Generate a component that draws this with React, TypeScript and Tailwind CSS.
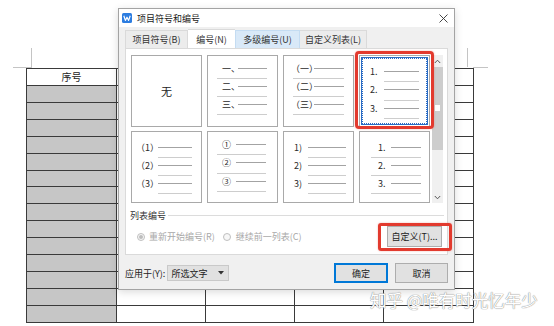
import React from "react";

type Cell = {
  labels: string[];
  pt: string;
  gap: string;
  lab: string;
  line: string;
  lower: string;
  selected?: boolean;
};

const cells: Cell[] = [
  { labels: [], pt: "", gap: "", lab: "", line: "", lower: "" },
  { labels: ["一、", "二、", "三、"], pt: "pt-[7px]", gap: "gap-[2px]", lab: "ml-[14px] w-[16px]", line: "w-[29px]", lower: "ml-[9px] w-[50px]" },
  { labels: ["（一）", "（二）", "（三）"], pt: "pt-[7px]", gap: "gap-[2px]", lab: "ml-[7px] w-[23px]", line: "w-[30px]", lower: "ml-[9px] w-[51px]" },
  { labels: ["1.", "2.", "3."], pt: "pt-[10px]", gap: "gap-[2.5px]", lab: "ml-[10px] w-[14px]", line: "w-[35px]", lower: "ml-[24px] w-[35px]", selected: true },
  { labels: ["（1）", "（2）", "（3）"], pt: "pt-[10px]", gap: "gap-[2px]", lab: "ml-[4px] w-[22px]", line: "w-[34px]", lower: "ml-[26px] w-[34px]" },
  { labels: ["①", "②", "③"], pt: "pt-[7px]", gap: "gap-[2.5px]", lab: "ml-[14px] w-[14px]", line: "w-[30px]", lower: "ml-[9px] w-[49px]" },
  { labels: ["1)", "2)", "3)"], pt: "pt-[10px]", gap: "gap-[2px]", lab: "ml-[10px] w-[14px]", line: "w-[38px]", lower: "ml-[24px] w-[38px]" },
  { labels: ["1.", "2.", "3."], pt: "pt-[10px]", gap: "gap-[2px]", lab: "ml-[18px] w-[13px]", line: "w-[30px]", lower: "ml-[11px] w-[50px]" },
];

function GalleryCell({ c, i }: { c: Cell; i: number }) {
  if (i === 0) {
    return (
      <div className="flex items-center justify-center border border-[#a9a9a9] bg-white text-[11px] text-[#222]">
        无
      </div>
    );
  }
  return (
    <div className={`relative flex flex-col border border-[#a9a9a9] bg-white ${c.pt} ${c.gap}`}>
      {c.labels.map((l) => (
        <div key={l} className="flex flex-col">
          <div className="flex h-[10px] items-center">
            <span className={`${c.lab} shrink-0 whitespace-nowrap font-['Noto_Sans_CJK_SC',sans-serif] text-[9px] leading-none text-[#2a2a2a]`}>{l}</span>
            <span className={`${c.line} h-px shrink-0 bg-[#a3a3a3]`} />
          </div>
          <div className={`${c.lower} mt-[5px] h-px bg-[#cdcdcd]`} />
        </div>
      ))}
      {c.selected ? (
        <>
          <div className="absolute inset-[1px] border border-[#2a6cc4]" />
          <div className="absolute inset-[2px] border border-dotted border-[#2a6cc4]" />
        </>
      ) : null}
    </div>
  );
}

function DocTable() {
  const rows = Array.from({ length: 15 }, (_, r) => r);
  const cols = [0, 1, 2, 3, 4];
  return (
    <div className="grid w-fit auto-rows-[16.93px] grid-cols-[90px_89px_89px_89px_90px] border-l border-t border-[#3a3a3a]">
      {rows.map((r) =>
        cols.map((c) => (
          <div
            key={`${r}-${c}`}
            className={`flex items-center justify-center border-b border-r border-[#3a3a3a] text-[10px] leading-none text-[#222] ${
              c === 0 && r > 0 ? "bg-[#c6c6c6]" : "bg-white"
            }`}
          >
            {r === 0 && c === 0 ? "序号" : null}
          </div>
        ))
      )}
    </div>
  );
}

function Radio({ checked }: { checked?: boolean }) {
  return (
    <span className="flex h-[8px] w-[8px] shrink-0 items-center justify-center rounded-full border border-[#bfbfbf] bg-[#f7f7f7]">
      {checked ? <span className="h-[4px] w-[4px] rounded-full bg-[#bdbdbd]" /> : null}
    </span>
  );
}

export default function App() {
  return (
    <div className="relative h-[326px] w-[554px] overflow-hidden bg-white font-['Noto_Sans_CJK_SC','Noto_Sans',sans-serif]">
      <div className="pl-[26px] pt-[68px]">
        <DocTable />
      </div>

      {/* page crop marks */}
      <div className="absolute left-[31px] top-[48px] h-[19px] w-px bg-[#c4c4c4]" />
      <div className="absolute left-[13px] top-[67px] h-px w-[19px] bg-[#c4c4c4]" />
      <div className="absolute left-[467px] top-[48px] h-[19px] w-px bg-[#c4c4c4]" />
      <div className="absolute left-[473px] top-[67px] h-px w-[15px] bg-[#c4c4c4]" />

      {/* dialog window */}
      <div className="absolute left-[118px] top-[8px] flex h-[282px] w-[337px] flex-col border border-[#a3a3a3] bg-[#f0f0f0] shadow-[0_2px_8px_rgba(0,0,0,0.15)]">
        <div className="flex h-[18px] shrink-0 items-center bg-white pl-[3px] pr-[6px]">
          <svg width="10" height="10" viewBox="0 0 10 10">
            <rect x="0" y="0" width="10" height="10" rx="1.5" fill="#2d7de0" />
            <polyline points="1.8,2.8 3.4,7.4 5,4.2 6.6,7.4 8.2,2.8" fill="none" stroke="#fff" strokeWidth="1.2" strokeLinejoin="round" />
          </svg>
          <span className="ml-[5px] text-[9px] leading-none text-[#1a1a1a]">项目符号和编号</span>
          <svg className="ml-auto" width="9" height="9" viewBox="0 0 9 9">
            <path d="M0.5 0.5 L8.5 8.5 M8.5 0.5 L0.5 8.5" stroke="#333" strokeWidth="0.9" />
          </svg>
        </div>

        {/* tabs */}
        <div className="mt-[3px] flex h-[18px] shrink-0 items-end pl-[6px] text-[9px] leading-none text-[#333]">
          <div className="flex h-[18px] w-[63px] items-center justify-center border border-b-0 border-[#dadada] bg-[#ececec]">项目符号(B)</div>
          <div className="flex h-[19px] w-[47px] items-center justify-center border-t border-[#dadada] bg-white">编号(N)</div>
          <div className="flex h-[18px] w-[65px] items-center justify-center border border-b-0 border-[#c4dcf2] bg-[#d9e9f8]">多级编号(U)</div>
          <div className="flex h-[18px] w-[67px] items-center justify-center border border-b-0 border-l-0 border-[#dadada] bg-[#ececec]">自定义列表(L)</div>
        </div>

        {/* tab panel */}
        <div className="mx-[6px] flex h-[207px] shrink-0 flex-col border border-[#dadada] bg-white">
          <div className="flex pl-[5px] pt-[6px]">
            <div className="grid grid-cols-[71px_71px_71px_71px] grid-rows-[72px_72px] gap-x-[5px] gap-y-[4px]">
              {cells.map((c, i) => (
                <GalleryCell key={i} c={c} i={i} />
              ))}
            </div>
            <div className="ml-[2px] flex h-[148px] w-[11px] flex-col bg-[#f0f0f0]">
              <div className="flex h-[12px] items-center justify-center">
                <svg width="7" height="5" viewBox="0 0 7 5">
                  <path d="M0.8 4 L3.5 1.2 L6.2 4" fill="none" stroke="#555" strokeWidth="1" />
                </svg>
              </div>
              <div className="flex h-[83px] flex-col bg-[#cdcdcd]">
                <div className="ml-[3px] mt-[38px] h-[6px] w-[5px] bg-white" />
              </div>
              <div className="flex-1" />
              <div className="flex h-[12px] items-center justify-center">
                <svg width="7" height="5" viewBox="0 0 7 5">
                  <path d="M0.8 1 L3.5 3.8 L6.2 1" fill="none" stroke="#555" strokeWidth="1" />
                </svg>
              </div>
            </div>
          </div>

          <div className="mt-[6px] flex h-[12px] items-center pl-[4px] pr-[3px]">
            <span className="text-[9px] leading-none text-[#333]">列表编号</span>
            <div className="ml-[2px] h-px flex-1 bg-[#dcdcdc]" />
          </div>

          <div className="mt-[5px] flex h-[21px] items-center pl-[11px] pr-[5px] text-[9px] leading-none text-[#a8a8a8]">
            <Radio checked />
            <span className="ml-[4px]">重新开始编号(R)</span>
            <span className="ml-[8px]">
              <Radio />
            </span>
            <span className="ml-[5px]">继续前一列表(C)</span>
            <div className="ml-auto flex h-[21px] w-[55px] items-center justify-center border border-[#adadad] bg-[#e1e1e1] text-[9px] text-[#222]">
              自定义(T)...
            </div>
          </div>
        </div>

        {/* bottom row */}
        <div className="mt-[8px] flex h-[20px] shrink-0 items-center px-[6px] text-[9px] leading-none text-[#222]">
          <span>应用于(Y):</span>
          <div className="ml-[2px] flex h-[16px] w-[62px] items-center border border-[#c9c9c9] bg-[#e1e1e1] pl-[3px] pr-[4px]">
            <span>所选文字</span>
            <svg className="ml-auto" width="6" height="4" viewBox="0 0 6 4">
              <path d="M0 0 L6 0 L3 3.5 Z" fill="#333" />
            </svg>
          </div>
          <div className="ml-auto flex h-[20px] w-[54px] items-center justify-center border border-[#0078d7] bg-[#e1e1e1] shadow-[inset_0_0_0_1px_#0078d7]">
            确定
          </div>
          <div className="ml-[7px] flex h-[20px] w-[53px] items-center justify-center border border-[#adadad] bg-[#e1e1e1]">
            取消
          </div>
        </div>
      </div>

      {/* red annotation boxes */}
      <div className="absolute left-[355px] top-[51px] h-[78px] w-[79px] rounded-[4px] border-[3px] border-[#e23a2e] shadow-[0_0_2px_rgba(226,58,46,0.4)]" />
      <div className="absolute left-[378px] top-[223px] h-[28px] w-[74px] rounded-[3px] border-[3px] border-[#e23a2e] shadow-[0_0_2px_rgba(226,58,46,0.4)]" />

      {/* watermark */}
      <div className="absolute left-[370px] top-[292px] whitespace-nowrap text-[16.5px] leading-none text-white [text-shadow:0_0_1px_#8a8a8a,0_0_1px_#8a8a8a]">
        知乎 @唯有时光忆年少
      </div>
    </div>
  );
}
